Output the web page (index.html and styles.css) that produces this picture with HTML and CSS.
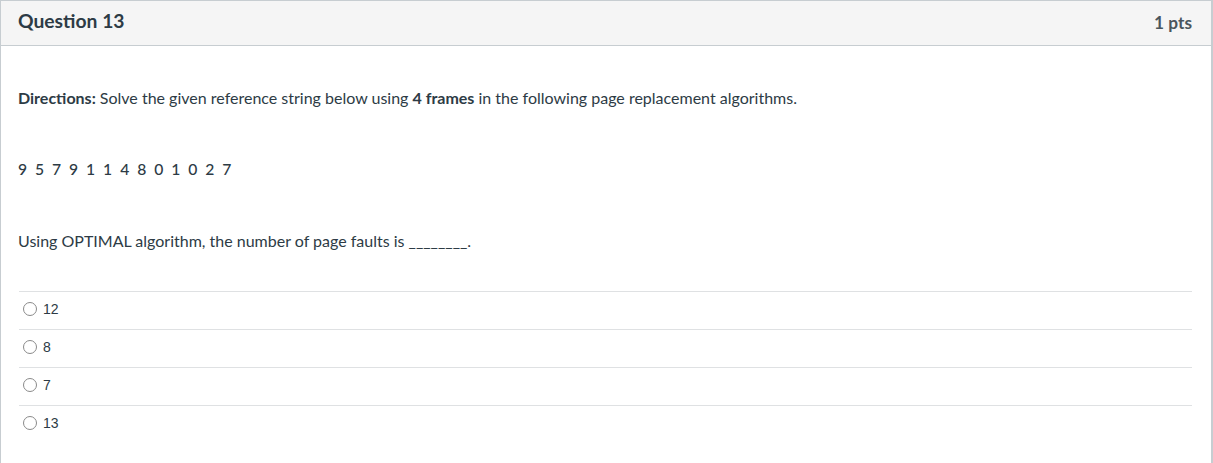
FILE: index.html
```html
<!DOCTYPE html>
<html>
<head>
<meta charset="utf-8">
<link rel="stylesheet" href="styles.css">
</head>
<body>
<div class="question">
  <div class="q-header">
    <h2 class="q-title">Question 13</h2>
    <div class="q-points">1 pts</div>
  </div>
  <div class="q-body">
    <p class="directions"><strong>Directions:</strong> Solve the given reference string below using <strong>4 frames</strong> in the following page replacement algorithms.</p>
    <p class="refstring">9&nbsp; 5&nbsp; 7&nbsp; 9&nbsp; 1&nbsp; 1&nbsp; 4&nbsp; 8&nbsp; 0&nbsp; 1&nbsp; 0&nbsp; 2&nbsp; 7</p>
    <p class="prompt">Using OPTIMAL algorithm, the number of page faults is ________.</p>
    <div class="answers">
      <label class="answer"><span class="radio"></span><span class="answer-text">12</span></label>
      <label class="answer"><span class="radio"></span><span class="answer-text">8</span></label>
      <label class="answer"><span class="radio"></span><span class="answer-text">7</span></label>
      <label class="answer"><span class="radio"></span><span class="answer-text">13</span></label>
    </div>
  </div>
</div>
</body>
</html>
```
FILE: styles.css
```css
html, body {
  margin: 0;
  padding: 0;
  background: #ffffff;
}
body {
  font-family: Lato, "Noto Sans", sans-serif;
  color: #2d3b45;
}
.question {
  width: 1213px;
  height: 470px;
  border: 1px solid #c7cdd1;
  border-right-width: 2px;
  border-bottom: none;
  box-sizing: border-box;
}
.q-header {
  display: flex;
  justify-content: space-between;
  align-items: center;
  height: 44px;
  padding: 0 19px 0 17px;
  background: #f5f5f5;
  border-bottom: 1px solid #c7cdd1;
}
.q-title {
  margin: 0;
  font-size: 19.3px;
  font-weight: 700;
  line-height: 24px;
  margin-top: -4px;
}
.q-points {
  font-size: 17.3px;
  font-weight: 700;
  color: #4a555d;
  margin-top: -2px;
}
.q-body {
  padding: 40px 19px 0 17px;
}
.q-body p {
  margin: 0;
  font-size: 16px;
  line-height: 24px;
}
.refstring {
  margin-top: 47px !important;
  font-size: 15.7px !important;
  font-weight: 500;
}
.prompt {
  margin-top: 48px !important;
}
.answers {
  margin-top: 38px;
  margin-left: 1px;
}
.answer {
  display: flex;
  align-items: center;
  height: 38px;
  padding-bottom: 4px;
  box-sizing: border-box;
  border-top: 1px solid #dfe1e3;
  font-family: "Liberation Sans", Arial, sans-serif;
  font-size: 14px;
  color: #2d3b45;
}
.radio {
  width: 12px;
  height: 12px;
  border: 1px solid #8a8a8a;
  border-radius: 50%;
  margin-left: 4px;
  margin-right: 6px;
  margin-top: 1px;
  box-sizing: content-box;
}
```
